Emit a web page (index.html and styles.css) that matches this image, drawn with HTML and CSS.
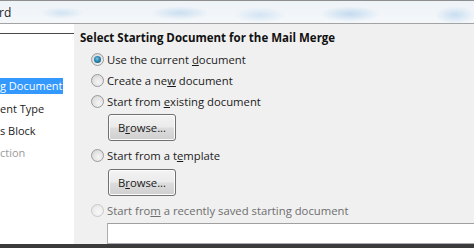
FILE: index.html
```
<!DOCTYPE html>
<html>
<head>
<meta charset="utf-8">
<link rel="stylesheet" href="styles.css">
</head>
<body>
<div class="window">
  <div class="titlebar"><span class="title">rd</span></div>
  <div class="main">
    <div class="steps">
      <div class="steps-rule"></div>
      <ul class="step-list">
        <li class="step step-active">g Document</li>
        <li class="step">ent Type</li>
        <li class="step">s Block</li>
        <li class="step step-disabled">ction</li>
      </ul>
    </div>
    <div class="page">
      <div class="heading">Select Starting Document for the Mail Merge</div>
      <label class="option option-first"><span class="radio radio-checked"></span><span class="option-label">Use the current <u>d</u>ocument</span></label>
      <label class="option"><span class="radio"></span><span class="option-label">Create a ne<u>w</u> document</span></label>
      <label class="option"><span class="radio"></span><span class="option-label">Start from <u>e</u>xisting document</span></label>
      <button class="btn btn-first">B<u>r</u>owse...</button>
      <label class="option option-after-btn"><span class="radio"></span><span class="option-label">Start from a t<u>e</u>mplate</span></label>
      <button class="btn btn-second">B<u>r</u>owse...</button>
      <label class="option option-after-btn2 option-disabled"><span class="radio radio-disabled"></span><span class="option-label">Start fro<u>m</u> a recently saved starting document</span></label>
      <div class="recent-box"></div>
    </div>
  </div>
  <div class="taskbar"></div>
</div>
</body>
</html>
```
FILE: styles.css
```
html, body {
  margin: 0;
  padding: 0;
}
body {
  width: 474px;
  height: 248px;
  overflow: hidden;
  font-family: "Open Sans", "Noto Sans", sans-serif;
  font-size: 11.3px;
  color: #1b1b1b;
  background: #f0f0f0;
}
.window {
  display: flex;
  flex-direction: column;
  height: 248px;
}
.titlebar {
  height: 22px;
  border-top: 1px solid #8e8e8e;
  border-bottom: 1px solid #a3a3a3;
  background:
    radial-gradient(ellipse 22px 6px at 62px 12px, rgba(170, 205, 235, 0.45), transparent),
    radial-gradient(ellipse 30px 7px at 180px 12px, rgba(165, 200, 232, 0.5), transparent),
    radial-gradient(ellipse 26px 8px at 260px 14px, rgba(175, 208, 236, 0.45), transparent),
    radial-gradient(ellipse 30px 8px at 350px 13px, rgba(150, 192, 230, 0.5), transparent),
    radial-gradient(ellipse 20px 9px at 455px 14px, rgba(160, 198, 232, 0.5), transparent),
    linear-gradient(#eef3f8, #f4f7fa);
  display: flex;
  align-items: center;
}
.title {
  font-size: 12px;
  color: #1e1e1e;
  margin-left: -1px;
}
.main {
  flex: 1;
  display: flex;
  min-height: 0;
}
.steps {
  width: 74px;
  background: #ffffff;
  padding-top: 9px;
  box-sizing: border-box;
}
.steps-rule {
  height: 1px;
  background: #4a4a4a;
}
.step-list {
  list-style: none;
  margin: 0;
  padding: 0;
  margin-top: 44px;
}
.step {
  height: 15px;
  line-height: 15px;
  width: 63px;
  white-space: nowrap;
  margin-bottom: 7px;
  font-size: 11px;
  color: #1b1b1b;
}
.step-active {
  background: #3399ff;
  color: #ffffff;
  height: 16px;
  line-height: 16px;
}
.step-disabled {
  color: #9a9a9a;
}
.page {
  flex: 1;
  padding-left: 6px;
  padding-top: 6px;
  display: flex;
  flex-direction: column;
  align-items: flex-start;
  overflow: hidden;
}
.heading {
  font-weight: bold;
  font-size: 11.5px;
  line-height: 16px;
  height: 16px;
  white-space: nowrap;
  color: #111;
}
.option {
  display: flex;
  align-items: center;
  height: 21px;
  margin-left: 11px;
  white-space: nowrap;
}
.option-first {
  margin-top: 3px;
}
.option-after-btn {
  margin-top: 4px;
}
.option-after-btn2 {
  margin-top: 4px;
}
.option-label {
  margin-left: 3px;
}
.option-disabled {
  color: #6e6e6e;
}
.radio {
  width: 11px;
  height: 11px;
  border-radius: 50%;
  border: 1px solid #9a9b9c;
  background: radial-gradient(circle at 60% 65%, #f6f6f6 0, #e2e2e2 55%, #cdcdcd 100%);
  position: relative;
  flex: none;
}
.radio-checked::after {
  content: "";
  position: absolute;
  left: 2px;
  top: 2px;
  width: 7px;
  height: 7px;
  border-radius: 50%;
  background: radial-gradient(circle at 45% 40%, #7fc6e4 0, #2a86b2 45%, #0f3f5e 100%);
}
.radio-disabled {
  border-color: #c9c9c9;
  background: radial-gradient(circle at 60% 65%, #f8f8f8 0, #ececec 60%, #e0e0e0 100%);
}
.btn {
  width: 68px;
  height: 27px;
  margin-left: 28px;
  border: 1px solid #707070;
  border-radius: 3px;
  background: linear-gradient(#f3f3f3 0%, #ebebeb 48%, #dddddd 52%, #cfcfcf 100%);
  box-shadow: inset 0 0 0 1px #fcfcfc;
  font-family: "Open Sans", "Noto Sans", sans-serif;
  font-size: 11.3px;
  color: #1b1b1b;
  padding: 0;
  box-sizing: border-box;
}
.btn-first {
  margin-top: 2px;
}
.btn-second {
  margin-top: 3px;
}
.recent-box {
  margin-top: 2px;
  margin-left: 27px;
  width: 420px;
  height: 21px;
  box-sizing: border-box;
  background: #ffffff;
  border: 1px solid #abadb3;
  border-top-color: #a0a0a0;
  flex: none;
}
.taskbar {
  height: 4px;
  background: #3b3b3b;
}
```
